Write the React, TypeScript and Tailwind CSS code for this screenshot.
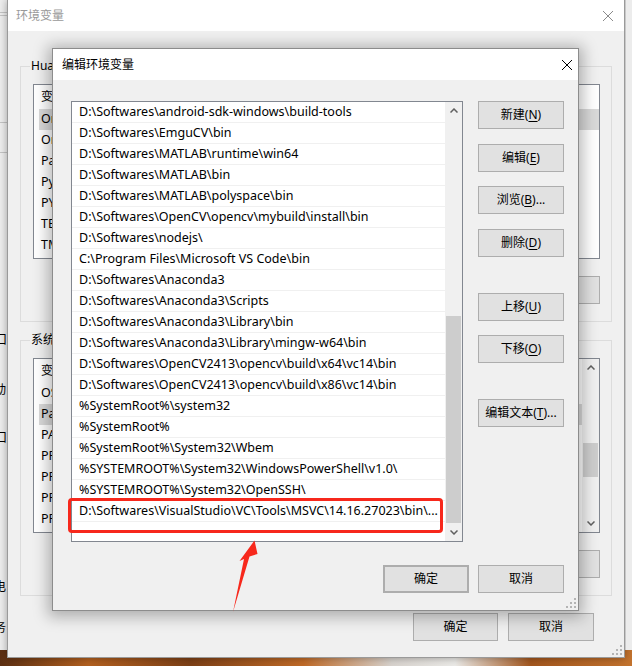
import React from "react";

const ui = "font-['Noto_Sans','Noto_Sans_CJK_SC',sans-serif]";

const paths = [
  "D:\\Softwares\\android-sdk-windows\\build-tools",
  "D:\\Softwares\\EmguCV\\bin",
  "D:\\Softwares\\MATLAB\\runtime\\win64",
  "D:\\Softwares\\MATLAB\\bin",
  "D:\\Softwares\\MATLAB\\polyspace\\bin",
  "D:\\Softwares\\OpenCV\\opencv\\mybuild\\install\\bin",
  "D:\\Softwares\\nodejs\\",
  "C:\\Program Files\\Microsoft VS Code\\bin",
  "D:\\Softwares\\Anaconda3",
  "D:\\Softwares\\Anaconda3\\Scripts",
  "D:\\Softwares\\Anaconda3\\Library\\bin",
  "D:\\Softwares\\Anaconda3\\Library\\mingw-w64\\bin",
  "D:\\Softwares\\OpenCV2413\\opencv\\build\\x64\\vc14\\bin",
  "D:\\Softwares\\OpenCV2413\\opencv\\build\\x86\\vc14\\bin",
  "%SystemRoot%\\system32",
  "%SystemRoot%",
  "%SystemRoot%\\System32\\Wbem",
  "%SYSTEMROOT%\\System32\\WindowsPowerShell\\v1.0\\",
  "%SYSTEMROOT%\\System32\\OpenSSH\\",
  "D:\\Softwares\\VisualStudio\\VC\\Tools\\MSVC\\14.16.27023\\bin\\...",
];

const userVars = ["OneDrive", "OneDriveConsumer", "Path", "PyCharm Community Edition", "PYTHONPATH", "TEMP", "TMP"];
const sysVars = ["OS", "Path", "PATHEXT", "PROCESSOR_ARCHITECTURE", "PROCESSOR_IDENTIFIER", "PROCESSOR_LEVEL", "PROCESSOR_REVISION"];

function Chevron({ down }: { down?: boolean }) {
  return (
    <svg width="8" height="5" viewBox="0 0 8 5">
      <polyline
        points={down ? "0.5,0.5 4,4 7.5,0.5" : "0.5,4.5 4,1 7.5,4.5"}
        fill="none"
        stroke="#606060"
        strokeWidth="1.5"
      />
    </svg>
  );
}

function CloseX({ color }: { color: string }) {
  return (
    <svg width="10" height="10" viewBox="0 0 10 10">
      <path d="M0 0 L10 10 M10 0 L0 10" stroke={color} strokeWidth="1" />
    </svg>
  );
}

function Grip() {
  return (
    <svg width="10" height="10" viewBox="0 0 10 10">
      <rect x="8" y="0" width="2" height="2" fill="#b4b4b4" />
      <rect x="4" y="4" width="2" height="2" fill="#b4b4b4" />
      <rect x="8" y="4" width="2" height="2" fill="#b4b4b4" />
      <rect x="0" y="8" width="2" height="2" fill="#b4b4b4" />
      <rect x="4" y="8" width="2" height="2" fill="#b4b4b4" />
      <rect x="8" y="8" width="2" height="2" fill="#b4b4b4" />
    </svg>
  );
}

function Btn({ children, className = "" }: { children: React.ReactNode; className?: string }) {
  return (
    <div
      className={`h-[28px] flex items-center justify-center bg-[#e1e1e1] border border-[#adadad] text-[12px] text-black ${className}`}
    >
      {children}
    </div>
  );
}

function U({ k }: { k: string }) {
  return <span className="underline underline-offset-2">{k}</span>;
}

function VarList({ rows, sel, scroll }: { rows: string[]; sel: number; scroll?: boolean }) {
  return (
    <div className="h-[175px] border border-[#828790] bg-white flex text-[12.5px] text-black">
      <div className="flex-1 flex flex-col">
        <div className="h-[24px] flex items-center pl-[7px] text-[12px]">
          <span className="w-[170px]">变量</span>
          <span>值</span>
        </div>
        {rows.map((r, i) => (
          <div
            key={r}
            className={`h-[21px] ml-[5px] pl-[2px] flex items-center whitespace-nowrap ${i === sel ? "bg-[#d9d9d9]" : ""}`}
          >
            {r}
          </div>
        ))}
      </div>
      {scroll && (
        <div className="w-[17px] bg-[#f0f0f0] flex flex-col">
          <div className="h-[17px] flex items-center justify-center">
            <Chevron />
          </div>
          <div className="flex-1">
            <div className="mt-[67px] ml-[1px] w-[15px] h-[34px] bg-[#cdcdcd]" />
          </div>
          <div className="h-[17px] flex items-center justify-center">
            <Chevron down />
          </div>
        </div>
      )}
    </div>
  );
}

function GroupButtons() {
  return (
    <div className="mt-[17px] flex justify-end gap-[10px]">
      <Btn className="w-[85px]">新建(W)...</Btn>
      <Btn className="w-[85px]">编辑(I)...</Btn>
      <Btn className="w-[85px]">删除(L)</Btn>
    </div>
  );
}

export default function App() {
  return (
    <div
      className={`relative w-[632px] h-[666px] overflow-hidden bg-[linear-gradient(90deg,#5c2f12_0%,#b3601f_14%,#7d4016_30%,#c06a27_48%,#d9d4cf_62%,#ecebe8_72%,#a3561d_84%,#c3732e_100%)] ${ui}`}
    >
      <div className="flex items-start">
        {/* window behind, left edge */}
        <div className="w-[7px] h-[650px] bg-[#eeeeee] overflow-hidden flex flex-col text-[12px] leading-[16px] text-black whitespace-nowrap">
          <div className="h-[12px]" />
          <div className="h-[1px] bg-[#c4c4c4]" />
          <div className="h-[2px]" />
          <div className="h-[1px] bg-[#c4c4c4]" />
          <div className="h-[106px]" />
          <div className="h-[1px] bg-[#c4c4c4]" />
          <div className="h-[29px]" />
          <div className="h-[1px] bg-[#c4c4c4]" />
          <div className="h-[179px]" />
          <div className="-ml-[5px]">口</div>
          <div className="mt-[34px] -ml-[6px]">动</div>
          <div className="mt-[32px] -ml-[5px]">口</div>
          <div className="mt-[133px] -ml-[6px]">电</div>
          <div className="mt-[25px] -ml-[6px]">务</div>
        </div>

        {/* 环境变量 */}
        <div className="w-[618px] h-[658px] border-x border-b border-[#9a9a9a] bg-[#f0f0f0] flex flex-col shadow-[0_0_8px_rgba(0,0,0,0.35)]">
          <div className="h-[31px] bg-white flex items-center justify-between pl-[8px] pr-[11px]">
            <span className="text-[12px] text-[#999999]">环境变量</span>
            <CloseX color="#8a8a8a" />
          </div>
          <div className="flex-1 flex flex-col pl-[12px] pr-[12px] relative">
            <fieldset className="mt-[27px] border border-[#dcdcdc] pl-[12px] pr-[11px] pb-[17px]">
              <legend className="-ml-[3px] px-[1px] text-[12px] leading-[16px] text-black">Huawei 的用户变量(U)</legend>
              <div className="mt-[10px]">
                <VarList rows={userVars} sel={0} />
              </div>
              <GroupButtons />
            </fieldset>
            <fieldset className="mt-[10px] border border-[#dcdcdc] pl-[12px] pr-[11px] pb-[17px]">
              <legend className="-ml-[3px] px-[1px] text-[12px] leading-[16px] text-black">系统变量(S)</legend>
              <div className="mt-[10px]">
                <VarList rows={sysVars} sel={1} scroll />
              </div>
              <GroupButtons />
            </fieldset>
            <div className="mt-[17px] flex justify-end gap-[10px] pr-[18px]">
              <Btn className="w-[85px]">确定</Btn>
              <Btn className="w-[86px]">取消</Btn>
            </div>
            <div className="absolute right-[2px] bottom-[2px]">
              <Grip />
            </div>
          </div>
        </div>

        {/* window behind, right edge */}
        <div className="w-[7px] h-[650px] bg-[#ececec] border-l border-[#c8c8c8]" />
      </div>

      {/* 编辑环境变量 */}
      <div className="absolute left-[52px] top-[48px] w-[527px] h-[563px] border border-[#8c8c8c] bg-[#f0f0f0] flex flex-col shadow-[0_2px_14px_4px_rgba(0,0,0,0.28)]">
        <div className="h-[31px] bg-white flex items-center justify-between pl-[9px] pr-[6px]">
          <span className="text-[12px] text-black">编辑环境变量</span>
          <CloseX color="#000000" />
        </div>
        <div className="flex-1 flex flex-col pl-[18px] pr-[14px] pt-[21px] relative">
          <div className="flex">
            <div className="w-[392px] h-[441px] border border-[#828790] bg-white flex">
              <div className="flex-1 flex flex-col">
                {paths.map((p) => (
                  <div
                    key={p}
                    className="h-[21px] border-b border-[#f0f0f0] pl-[7px] pt-[1px] flex items-center text-[12.5px] text-black whitespace-nowrap overflow-hidden"
                  >
                    {p}
                  </div>
                ))}
              </div>
              <div className="w-[17px] bg-[#f0f0f0] flex flex-col">
                <div className="h-[17px] flex items-center justify-center">
                  <Chevron />
                </div>
                <div className="flex-1 flex flex-col justify-end">
                  <div className="mx-auto w-[15px] h-[207px] bg-[#cdcdcd]" />
                </div>
                <div className="h-[18px] flex items-center justify-center">
                  <Chevron down />
                </div>
              </div>
            </div>
            <div className="ml-[15px] w-[86px] flex flex-col">
              <Btn>
                新建(<U k="N" />)
              </Btn>
              <Btn className="mt-[15px]">
                编辑(<U k="E" />)
              </Btn>
              <Btn className="mt-[14px]">
                浏览(<U k="B" />)...
              </Btn>
              <Btn className="mt-[15px]">
                删除(<U k="D" />)
              </Btn>
              <Btn className="mt-[36px]">
                上移(<U k="U" />)
              </Btn>
              <Btn className="mt-[14px]">
                下移(<U k="O" />)
              </Btn>
              <Btn className="mt-[36px]">
                编辑文本(<U k="T" />)...
              </Btn>
            </div>
          </div>
          <div className="mt-[23px] flex justify-end gap-[9px]">
            <Btn className="w-[86px] border-2 border-[#0078d7]">确定</Btn>
            <Btn className="w-[86px]">取消</Btn>
          </div>
          <div className="absolute right-[2px] bottom-[2px]">
            <Grip />
          </div>
        </div>
      </div>

      {/* red highlight + arrow */}
      <div className="absolute left-[68px] top-[498px] w-[375px] h-[35px] border-[3px] border-[#f7281c] rounded-[4px]" />
      <svg className="absolute left-0 top-0 pointer-events-none" width="632" height="666" viewBox="0 0 632 666">
        <polygon
          points="254.5,540.5 257.5,554 249.5,556.5 233,612 244,559 239.5,561"
          fill="#f7281c"
        />
      </svg>
    </div>
  );
}
